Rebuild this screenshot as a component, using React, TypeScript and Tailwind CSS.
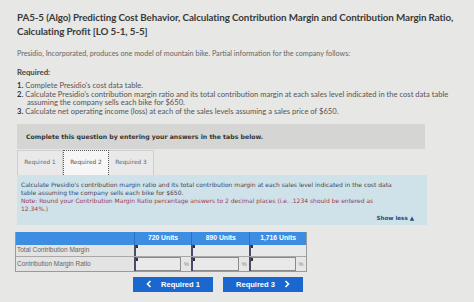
import React from "react";

const sans = { fontFamily: "Lato, 'Open Sans', Arial, sans-serif" };
const verd = { fontFamily: "'DejaVu Sans', Verdana, sans-serif" };
const arial = { fontFamily: "'Liberation Sans', Arial, sans-serif" };

function Mark() {
  return <span className="absolute left-0 top-0 w-[2px] h-[3px] bg-[#333]" />;
}

function Chev({ left }: { left?: boolean }) {
  return (
    <svg width="6" height="8" viewBox="0 0 6 8" fill="none" stroke="white" strokeWidth="1.6">
      {left ? <path d="M4.5 1 L1.5 4 L4.5 7" /> : <path d="M1.5 1 L4.5 4 L1.5 7" />}
    </svg>
  );
}

export default function App() {
  return (
    <div className="w-[474px] h-[302px] overflow-hidden bg-[#e7e7e5] relative">
      <div className="pl-[17px] pt-[10px]">
        <div style={sans} className="text-[9.8px] leading-[14px] font-bold text-[#3a3a3a] tracking-[-0.1px]">
          <div className="whitespace-nowrap">PA5-5 (Algo) Predicting Cost Behavior, Calculating Contribution Margin and Contribution Margin Ratio,</div>
          <div className="whitespace-nowrap">Calculating Profit [LO 5-1, 5-5]</div>
        </div>
        <div style={sans} className="mt-[11px] text-[7.2px] leading-[9px] text-[#666] whitespace-nowrap">
          Presidio, Incorporated, produces one model of mountain bike. Partial information for the company follows:
        </div>
        <div style={sans} className="mt-[10px] text-[7.8px] leading-[9px] font-bold text-[#444]">Required:</div>
        <div style={sans} className="mt-[4px] text-[7.6px] leading-[8.7px] text-[#555]">
          <div className="whitespace-nowrap"><b className="text-[#333]">1.</b> Complete Presidio's cost data table.</div>
          <div className="whitespace-nowrap"><b className="text-[#333]">2.</b> Calculate Presidio's contribution margin ratio and its total contribution margin at each sales level indicated in the cost data table</div>
          <div className="whitespace-nowrap pl-[10px]">assuming the company sells each bike for $650.</div>
          <div className="whitespace-nowrap"><b className="text-[#333]">3.</b> Calculate net operating income (loss) at each of the sales levels assuming a sales price of $650.</div>
        </div>

        <div className="mt-[8px] w-[408px] h-[25px] bg-[#d5d5d4] flex items-center pl-[9px]">
          <span style={verd} className="text-[6.2px] font-bold text-[#333] whitespace-nowrap">Complete this question by entering your answers in the tabs below.</span>
        </div>

        <div className="mt-[1px] flex h-[25px] items-end" style={verd}>
          <div className="w-[46px] h-[25px] border border-[#cfcfcf] border-b-0 bg-[#e9e9e9] flex items-center justify-center text-[5.8px] text-[#666]">Required 1</div>
          <div className="w-[46px] h-[25px] border border-dotted border-[#555] border-b-0 bg-[#f6f6f6] flex items-center justify-center text-[5.8px] text-[#555]">Required 2</div>
          <div className="w-[45px] h-[25px] border border-[#cfcfcf] border-b-0 border-l-0 bg-[#e9e9e9] flex items-center justify-center text-[5.8px] text-[#666]">Required 3</div>
        </div>

        <div style={verd} className="w-[410px] h-[50px] bg-[#cfe2ea] pl-[4px] pt-[6px] relative text-[6px] leading-[8px]">
          <div className="text-[#445] whitespace-nowrap">Calculate Presidio's contribution margin ratio and its total contribution margin at each sales level indicated in the cost data</div>
          <div className="text-[#445] whitespace-nowrap">table assuming the company sells each bike for $650.</div>
          <div className="text-[#9b3b4a] whitespace-nowrap">Note: Round your Contribution Margin Ratio percentage answers to 2 decimal places (i.e. .1234 should be entered as</div>
          <div className="text-[#9b3b4a] whitespace-nowrap">12.34%.)</div>
          <div className="absolute right-[13px] bottom-[3px] text-[5.6px] font-bold text-[#2a4a78]">Show less ▲</div>
        </div>
      </div>

      <div className="pl-[15px] mt-[7px]">
        <div style={arial} className="w-[292px] border border-[#9a9a9a] border-t-0">
          <div className="flex h-[13px] bg-[#3d8de2] text-white text-[6.8px] font-bold">
            <div className="w-[118px]" />
            <div className="w-[58px] border-l border-[#2f6fb8] flex items-center justify-center">720 Units</div>
            <div className="w-[58px] border-l border-[#2f6fb8] flex items-center justify-center">890 Units</div>
            <div className="w-[57px] border-l border-[#2f6fb8] flex items-center justify-center">1,716 Units</div>
          </div>
          <div className="flex h-[12px] border-b border-[#a8a8a8] text-[6.5px] text-[#666]">
            <div className="w-[118px] flex items-center pl-[1px] bg-[#e3e3e3]">Total Contribution Margin</div>
            <div className="w-[58px] border-l-2 border-[#4a4a6a] relative bg-[#e8e8e8]"><Mark /></div>
            <div className="w-[58px] border-l-2 border-[#4a4a6a] relative bg-[#e8e8e8]"><Mark /></div>
            <div className="w-[57px] border-l-2 border-[#4a4a6a] relative bg-[#e8e8e8]"><Mark /></div>
          </div>
          <div className="flex h-[14px] text-[6.5px] text-[#666]">
            <div className="w-[118px] flex items-center pl-[1px] bg-[#e3e3e3]">Contribution Margin Ratio</div>
            {[58, 58, 57].map((w, i) => (
              <div key={i} style={{ width: w }} className="flex border-l-2 border-[#4a4a6a] bg-[#e6e6e6]">
                <div className="flex-1 relative border border-[#8a8a8a] border-l-0 bg-[#e9e9e9]"><Mark /></div>
                <div className="w-[10px] flex items-center justify-center text-[5.5px] text-[#888]">%</div>
              </div>
            ))}
          </div>
        </div>

        <div style={arial} className="flex mt-[5px] ml-[118px] gap-[10px]">
          <div className="w-[80px] h-[15px] bg-[#1a68cf] text-white text-[7.5px] font-bold flex items-center justify-center gap-[9px]">
            <Chev left /><span>Required 1</span>
          </div>
          <div className="w-[80px] h-[15px] bg-[#1a68cf] text-white text-[7.5px] font-bold flex items-center justify-center gap-[9px]">
            <span>Required 3</span><Chev />
          </div>
        </div>
      </div>
    </div>
  );
}
